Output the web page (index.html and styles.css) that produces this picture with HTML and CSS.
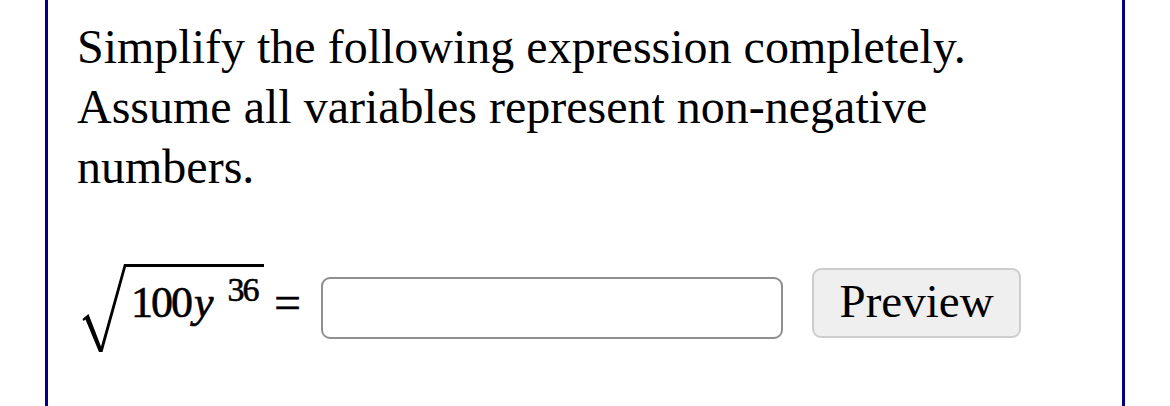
FILE: index.html
```html
<!DOCTYPE html>
<html>
<head>
<meta charset="utf-8">
<link rel="stylesheet" href="styles.css">
</head>
<body>
<div class="frame">
  <p class="question">Simplify the following expression completely.<br>Assume all variables represent non-negative<br>numbers.</p>
  <div class="answer-row">
    <div class="sqrt">
      <svg class="radical" width="44" height="90" viewBox="0 0 44 90">
        <polygon points="0.5,56 6.5,51 19,83.5 42,1 44,1 44,4 20.5,89 17,89 3.5,56.5 1.5,58" fill="#000"/>
      </svg>
      <div class="radicand"><span class="num">100</span><span class="var">y</span><span class="exp">36</span></div>
    </div>
    <span class="eq">=</span>
    <input class="answer" type="text">
    <button class="preview">Preview</button>
  </div>
</div>
</body>
</html>
```

FILE: styles.css
```css
html, body {
  margin: 0;
  padding: 0;
  background: #fff;
}
body {
  font-family: "Liberation Serif", "Times New Roman", serif;
  color: #000;
}
.frame {
  box-sizing: border-box;
  margin-left: 45px;
  width: 1080px;
  height: 406px;
  border-left: 3px solid #00008b;
  border-right: 3px solid #00008b;
  padding: 17px 0 0 29px;
}
.question {
  margin: 0;
  font-size: 48px;
  line-height: 60px;
}
.answer-row {
  display: flex;
  align-items: flex-start;
  margin-top: 66px;
  margin-left: 5px;
}
.sqrt {
  display: flex;
  align-items: flex-start;
}
.radical {
  display: block;
}
.radicand {
  box-sizing: border-box;
  width: 138px;
  height: 90px;
  border-top: 3px solid #000;
  margin-top: 1px;
  padding: 14px 0 0 5px;
  font-size: 44px;
  line-height: 44px;
  white-space: nowrap;
  -webkit-text-stroke: 0.6px #000;
}
.num {
  letter-spacing: -2px;
}
.var {
  font-style: italic;
  margin-left: 3px;
}
.exp {
  font-size: 34px;
  line-height: 0;
  letter-spacing: -2px;
  vertical-align: 16px;
  margin-left: 14px;
}
.eq {
  font-size: 48px;
  line-height: 48px;
  margin-left: 10px;
  margin-top: 16px;
  -webkit-text-stroke: 0.4px #000;
}
.answer {
  box-sizing: border-box;
  width: 462px;
  height: 62px;
  margin: 14px 0 0 20px;
  border: 2px solid #8e8e93;
  border-radius: 9px;
  background: #fff;
  outline: none;
  padding: 0 10px;
  font-size: 40px;
}
.preview {
  box-sizing: border-box;
  width: 209px;
  height: 70px;
  margin: 5px 0 0 29px;
  border: 2px solid #cdcdcd;
  border-radius: 9px;
  background: #efefef;
  color: #000;
  font-family: "Liberation Serif", "Times New Roman", serif;
  font-size: 47px;
  padding: 0 0 4px;
}
```
